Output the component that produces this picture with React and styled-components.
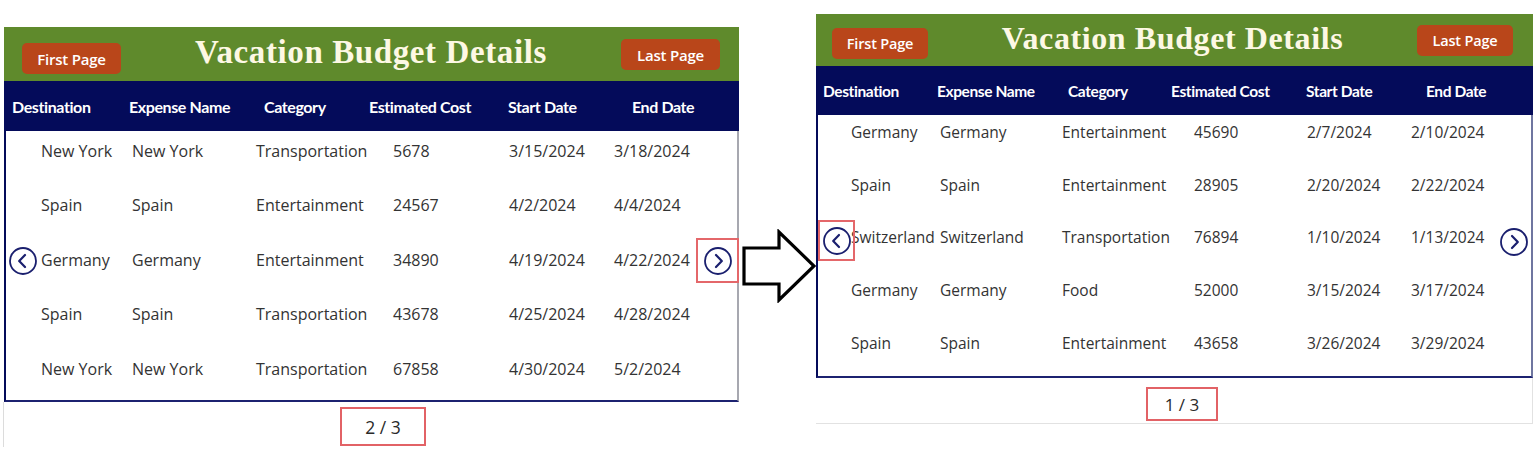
import React from "react";
import styled, { createGlobalStyle } from "styled-components";

const Global = createGlobalStyle`
  html, body { margin: 0; padding: 0; background: #ffffff; }
  body { font-family: "Open Sans", "Liberation Sans", sans-serif; }
`;

const NAVY = "#040b5a";
const GREEN = "#5f8a2c";
const RUST = "#b9461a";

const Page = styled.div`
  display: flex;
  align-items: flex-start;
  padding-left: 4px;
  width: 1536px;
  height: 456px;
  box-sizing: border-box;
  overflow: hidden;
`;

const Panel = styled.div`
  display: flex;
  flex-direction: column;
  width: ${(p) => p.$w}px;
  margin-top: ${(p) => p.$top}px;
  flex: none;
`;

const TitleBar = styled.div`
  display: grid;
  grid-template-columns: 1fr auto 1fr;
  align-items: start;
  height: ${(p) => p.$h}px;
  background: ${GREEN};
  padding: 0 ${(p) => p.$padR}px 0 ${(p) => p.$padL}px;
  box-sizing: border-box;
`;

const NavButton = styled.button`
  justify-self: ${(p) => p.$side};
  margin-top: ${(p) => p.$mt}px;
  width: ${(p) => p.$w}px;
  height: ${(p) => p.$h}px;
  border: none;
  border-radius: 5px;
  background: ${RUST};
  color: #ffffff;
  font-family: "Open Sans", "Liberation Sans", sans-serif;
  font-weight: 600;
  font-size: ${(p) => p.$fs}px;
  padding: 0;
  letter-spacing: -0.2px;
`;

const Title = styled.h1`
  margin: 0;
  align-self: center;
  font-family: "Liberation Serif", "DejaVu Serif", serif;
  font-weight: 700;
  font-size: ${(p) => p.$fs}px;
  color: #fdf8e4;
  white-space: nowrap;
  letter-spacing: 0.6px;
  transform: translateY(-2px);
`;

const HeaderRow = styled.div`
  display: grid;
  align-items: center;
  height: ${(p) => p.$h}px;
  background: ${NAVY};
  color: #ffffff;
  font-family: "Lato", "Liberation Sans", sans-serif;
  font-weight: 700;
  font-size: ${(p) => p.$fs}px;
  letter-spacing: -0.4px;
  white-space: nowrap;
`;

const Body = styled.div`
  position: relative;
  height: ${(p) => p.$h}px;
  box-sizing: border-box;
  border-left: 2px solid ${NAVY};
  border-bottom: 2px solid #1c2270;
  border-right: 2px solid ${(p) => p.$rightBorder};
  background: #ffffff;
`;

const DataRow = styled.div`
  display: grid;
  align-items: center;
  height: ${(p) => p.$h}px;
  line-height: ${(p) => p.$lh}px;
  align-content: start;
  color: #333333;
  font-family: "Open Sans", "Liberation Sans", sans-serif;
  font-size: ${(p) => p.$fs}px;
  white-space: nowrap;
`;

const Cell = styled.span`
  display: block;
`;

const IconSpot = styled.div`
  position: absolute;
  display: flex;
  align-items: center;
  justify-content: center;
  box-sizing: border-box;
  border: ${(p) => (p.$marked ? "2px solid #e4676a" : "none")};
`;

const Pager = styled.div`
  height: ${(p) => p.$h}px;
  box-sizing: border-box;
  display: flex;
  align-items: flex-start;
  padding-left: ${(p) => p.$padL}px;
  padding-top: ${(p) => p.$padT}px;
  border-left: ${(p) => (p.$lineLeft ? "1px solid #dcdcdc" : "none")};
  border-right: ${(p) => (p.$lineRight ? "1px solid #e2e2e2" : "none")};
  border-bottom: ${(p) => (p.$lineRight ? "1px solid #e2e2e2" : "none")};
  margin-left: ${(p) => (p.$lineLeft ? "-1px" : "0")};
`;

const PageBox = styled.div`
  width: ${(p) => p.$w}px;
  height: ${(p) => p.$h}px;
  box-sizing: border-box;
  border: 2px solid #e26266;
  display: flex;
  align-items: center;
  justify-content: center;
  font-family: "Open Sans", "Liberation Sans", sans-serif;
  font-size: ${(p) => p.$fs}px;
  color: #2a2a2a;
`;

const ArrowSlot = styled.div`
  width: 77px;
  flex: none;
  margin-top: 229px;
  display: flex;
`;

const Chevron = ({ dir, size = 30 }) => (
  <svg width={size} height={size} viewBox="0 0 30 30">
    <circle cx="15" cy="15" r="13" fill="#fff" stroke="#1a1f6e" strokeWidth="1.8" />
    {dir === "left" ? (
      <path d="M17 9 L11.2 15 L17 21" fill="none" stroke="#1a1f6e" strokeWidth="2.2" strokeLinecap="round" strokeLinejoin="round" />
    ) : (
      <path d="M13 9 L18.8 15 L13 21" fill="none" stroke="#1a1f6e" strokeWidth="2.2" strokeLinecap="round" strokeLinejoin="round" />
    )}
  </svg>
);

const BigArrow = () => (
  <svg width="77" height="74" viewBox="0 0 77 74">
    <polygon
      points="5,19 40,19 40,3 75,37 40,71 40,55 5,55"
      fill="#ffffff"
      stroke="#000000"
      strokeWidth="3.2"
      strokeLinejoin="miter"
    />
  </svg>
);

const template = (starts) => {
  const parts = [`${starts[0]}px`];
  for (let i = 0; i < starts.length - 1; i++) parts.push(`${starts[i + 1] - starts[i]}px`);
  parts.push("1fr");
  return parts.join(" ");
};

const HEADERS = ["Destination", "Expense Name", "Category", "Estimated Cost", "Start Date", "End Date"];

const Gallery = ({ cfg }) => {
  const headCols = template(cfg.headStarts);
  const dataCols = template(cfg.dataStarts);
  return (
    <Panel $w={cfg.width} $top={cfg.top}>
      <TitleBar $h={cfg.titleH} $padL={cfg.padL} $padR={cfg.padR}>
        <NavButton $side="start" $mt={cfg.firstMt} $w={cfg.btnW} $h={cfg.btnH} $fs={cfg.btnFs}>
          First Page
        </NavButton>
        <Title $fs={cfg.titleFs}>Vacation Budget Details</Title>
        <NavButton $side="end" $mt={cfg.lastMt} $w={cfg.btnW} $h={cfg.btnH} $fs={cfg.btnFs}>
          Last Page
        </NavButton>
      </TitleBar>
      <HeaderRow $h={cfg.headH} $fs={cfg.headFs} style={{ gridTemplateColumns: headCols }}>
        <span />
        {HEADERS.map((h) => (
          <Cell key={h}>{h}</Cell>
        ))}
      </HeaderRow>
      <Body $h={cfg.bodyH} $rightBorder={cfg.rightBorder}>
        {cfg.rows.map((r, i) => (
          <DataRow key={i} $h={cfg.rowH} $lh={cfg.rowLh} $fs={cfg.dataFs} style={{ gridTemplateColumns: dataCols }}>
            <span />
            {r.map((c, j) => (
              <Cell key={j}>{c}</Cell>
            ))}
          </DataRow>
        ))}
        {cfg.icons.map((ic, i) => (
          <IconSpot
            key={i}
            $marked={ic.marked}
            style={{ left: ic.x, top: ic.y, width: ic.w, height: ic.h }}
          >
            <Chevron dir={ic.dir} size={ic.size} />
          </IconSpot>
        ))}
      </Body>
      <Pager
        $h={cfg.pagerH}
        $padL={cfg.pageBoxL}
        $padT={cfg.pageBoxT}
        $lineLeft={cfg.lineLeft}
        $lineRight={cfg.lineRight}
      >
        <PageBox $w={cfg.pageBoxW} $h={cfg.pageBoxH} $fs={cfg.pageFs}>
          {cfg.pageText}
        </PageBox>
      </Pager>
    </Panel>
  );
};

const LEFT = {
  width: 735,
  top: 27,
  titleH: 54,
  padL: 18,
  padR: 19,
  firstMt: 16,
  lastMt: 12,
  btnW: 99,
  btnH: 31,
  btnFs: 15,
  titleFs: 33,
  headH: 50,
  headFs: 16,
  headStarts: [8, 125, 260, 365, 504, 628],
  dataStarts: [35, 126, 250, 387, 503, 608],
  bodyH: 271,
  rightBorder: "#a7a8b0",
  rowH: 54.4,
  rowLh: 40,
  dataFs: 16,
  rows: [
    ["New York", "New York", "Transportation", "5678", "3/15/2024", "3/18/2024"],
    ["Spain", "Spain", "Entertainment", "24567", "4/2/2024", "4/4/2024"],
    ["Germany", "Germany", "Entertainment", "34890", "4/19/2024", "4/22/2024"],
    ["Spain", "Spain", "Transportation", "43678", "4/25/2024", "4/28/2024"],
    ["New York", "New York", "Transportation", "67858", "4/30/2024", "5/2/2024"],
  ],
  icons: [
    { dir: "left", x: 1, y: 114, w: 32, h: 32, size: 30, marked: false },
    { dir: "right", x: 690, y: 107, w: 43, h: 45, size: 30, marked: true },
  ],
  pagerH: 45,
  pageBoxL: 336,
  pageBoxT: 5,
  pageBoxW: 86,
  pageBoxH: 39,
  pageFs: 17.5,
  pageText: "2 / 3",
  lineLeft: true,
  lineRight: false,
};

const RIGHT = {
  width: 717,
  top: 14,
  titleH: 52,
  padL: 16,
  padR: 20,
  firstMt: 14,
  lastMt: 11,
  btnW: 96,
  btnH: 31,
  btnFs: 14.5,
  titleFs: 32,
  headH: 49,
  headFs: 15.5,
  headStarts: [7, 121, 252, 355, 490, 610],
  dataStarts: [33, 122, 244, 376, 489, 593],
  bodyH: 263,
  rightBorder: "#6f76a0",
  rowH: 52.7,
  rowLh: 34,
  dataFs: 15.5,
  rows: [
    ["Germany", "Germany", "Entertainment", "45690", "2/7/2024", "2/10/2024"],
    ["Spain", "Spain", "Entertainment", "28905", "2/20/2024", "2/22/2024"],
    ["Switzerland", "Switzerland", "Transportation", "76894", "1/10/2024", "1/13/2024"],
    ["Germany", "Germany", "Food", "52000", "3/15/2024", "3/17/2024"],
    ["Spain", "Spain", "Entertainment", "43658", "3/26/2024", "3/29/2024"],
  ],
  icons: [
    { dir: "left", x: 0, y: 105, w: 37, h: 41, size: 30, marked: true },
    { dir: "right", x: 680, y: 111, w: 31, h: 31, size: 30, marked: false },
  ],
  pagerH: 46,
  pageBoxL: 330,
  pageBoxT: 9,
  pageBoxW: 72,
  pageBoxH: 34,
  pageFs: 17,
  pageText: "1 / 3",
  lineLeft: false,
  lineRight: true,
};

export default function App() {
  return (
    <>
      <Global />
      <Page>
        <Gallery cfg={LEFT} />
        <ArrowSlot>
          <BigArrow />
        </ArrowSlot>
        <Gallery cfg={RIGHT} />
      </Page>
    </>
  );
}
